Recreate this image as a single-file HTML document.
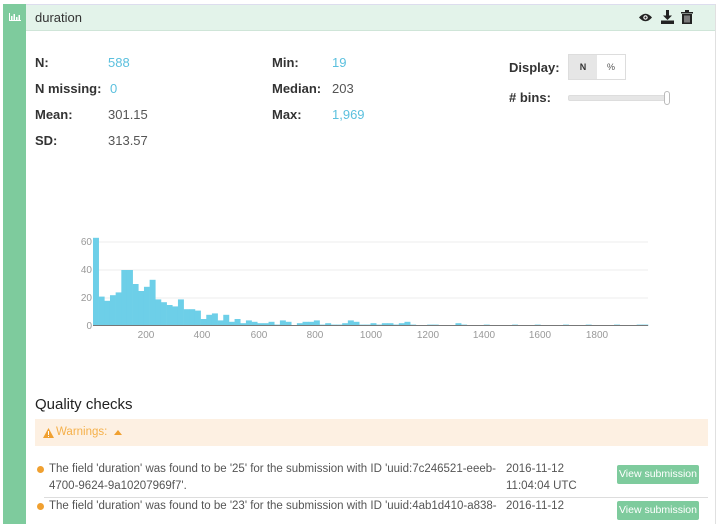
<!DOCTYPE html>
<html><head><meta charset="utf-8"><style>
*{box-sizing:border-box;margin:0;padding:0}
body{width:720px;height:513px;overflow:hidden;background:#fff;font-family:"Liberation Sans",sans-serif;color:#444;position:relative}
.a{position:absolute;white-space:nowrap}
.g{position:absolute;left:3px;top:4px;width:23px;height:520px;background:#7ecb9d}
.hdr{position:absolute;left:26px;top:4px;width:690px;height:27px;background:#e3f3ea;border-bottom:1px solid #cfe5d8;border-top:1px solid #dde}
.rb{position:absolute;left:715px;top:4px;width:1px;height:520px;background:#e0e0e0}
.l{font-weight:bold;font-size:13px;color:#333}
.v{font-size:13px;color:#555}
.b{color:#5bc0de}
.t{font-size:11.5px;color:#555;line-height:17px}
.btn{position:absolute;left:617px;width:82px;height:19px;background:#7ecb9d;color:#fff;font-size:10.5px;text-align:center;line-height:19px;border-radius:2px;white-space:nowrap;overflow:hidden}
</style></head><body>
<div class="g"></div>
<div class="hdr"></div>
<div class="rb"></div>
<svg class="a" style="left:9px;top:12px" width="12" height="10"><g fill="#fff"><rect x="0" y="8" width="12" height="1"/><rect x="0" y="1" width="1" height="8"/><rect x="2" y="4" width="1.5" height="4"/><rect x="4.5" y="2" width="1.5" height="6"/><rect x="7" y="5" width="1.5" height="3"/><rect x="9.5" y="3" width="1.5" height="5"/></g></svg>
<div class="a" style="left:35px;top:10px;font-size:13px;color:#333">duration</div>
<svg class="a" style="left:638px;top:12px" width="15" height="11"><path d="M1 5.5Q7.5 -2 14 5.5Q7.5 13 1 5.5Z" fill="#222"/><circle cx="7.5" cy="5.5" r="2.2" fill="#fff"/><circle cx="7.5" cy="5.5" r="1.1" fill="#222"/></svg>
<svg class="a" style="left:661px;top:10px" width="13" height="14"><path d="M5 0h3v5.5h3l-4.5 4.5L2 5.5h3z M0 10.5h13v3.5H0z" fill="#222"/></svg>
<svg class="a" style="left:681px;top:10px" width="12" height="14"><path d="M0 2h12v1.5H0z M4 0h4v2H4z M1 4h10v10H1z" fill="#222"/><path d="M4 5.5v7M6 5.5v7M8 5.5v7" stroke="#fff" stroke-width="0.8"/></svg>

<div class="a l" style="left:35px;top:55px">N:</div><div class="a v b" style="left:108px;top:55px">588</div>
<div class="a l" style="left:35px;top:81px">N missing:</div><div class="a v b" style="left:110px;top:81px">0</div>
<div class="a l" style="left:35px;top:107px">Mean:</div><div class="a v" style="left:108px;top:107px">301.15</div>
<div class="a l" style="left:35px;top:133px">SD:</div><div class="a v" style="left:108px;top:133px">313.57</div>
<div class="a l" style="left:272px;top:55px">Min:</div><div class="a v b" style="left:332px;top:55px">19</div>
<div class="a l" style="left:272px;top:81px">Median:</div><div class="a v" style="left:332px;top:81px">203</div>
<div class="a l" style="left:272px;top:107px">Max:</div><div class="a v b" style="left:332px;top:107px">1,969</div>
<div class="a l" style="left:509px;top:60px">Display:</div>
<div class="a" style="left:568px;top:54px;width:58px;height:26px;border:1px solid #ddd;display:flex;font-size:9px;font-weight:bold">
<div style="width:28px;background:#e6e6e6;text-align:center;line-height:24px;color:#333">N</div>
<div style="flex:1;text-align:center;line-height:24px;color:#555;font-weight:normal">%</div></div>
<div class="a l" style="left:509px;top:90px">#&nbsp;bins:</div>
<div class="a" style="left:568px;top:95px;width:98px;height:6px;background:#e6e6e6;border:1px solid #ddd;border-radius:2px"></div>
<div class="a" style="left:664px;top:91px;width:6px;height:14px;background:#fff;border:1px solid #bbb;border-radius:3px"></div>

<svg class="a" style="left:60px;top:230px" width="600" height="115" id="ch">
<g stroke="#eee" stroke-width="1"><line x1="33" x2="588" y1="12" y2="12"/><line x1="33" x2="588" y1="40" y2="40"/><line x1="33" x2="588" y1="68" y2="68"/></g>
<g font-family="Liberation Sans,sans-serif" font-size="10" fill="#999" text-anchor="end"><text x="32" y="15">60</text><text x="32" y="43">40</text><text x="32" y="71">20</text><text x="32" y="99">0</text></g>
<g font-family="Liberation Sans,sans-serif" font-size="10" fill="#999" text-anchor="middle"><text x="86" y="108">200</text><text x="142" y="108">400</text><text x="199" y="108">600</text><text x="255" y="108">800</text><text x="311" y="108">1000</text><text x="368" y="108">1200</text><text x="424" y="108">1400</text><text x="480" y="108">1600</text><text x="537" y="108">1800</text></g>
<g id="bars" fill="#6dcfe8"></g>
<line x1="33" x2="588" y1="95.5" y2="95.5" stroke="#777" stroke-width="1"/>
</svg>
<script>
var h=[63,21,18,22,24,40,40,30,25,28,33,19,17,15,14,19,12,12,11,5,8,9,4,8,3,5,2,4,3,2,2,3,1,4,3,0,2,3,3,4,1,2,1,1,2,4,3,1,1,2,1,2,2,1,2,3,1,0,0,1,1,0,0,0,2,1,0,0,0,1,0,0,0,0,1,0,0,0,1,0,0,0,0,1,0,0,0,1,0,0,0,0,1,0,0,0,1,1];
var g=document.getElementById('bars'),s='',w=555/h.length;
for(var i=0;i<h.length;i++){if(h[i]>0){var y=h[i]*1.4;s+='<rect x="'+(33+i*w).toFixed(2)+'" y="'+(96-y).toFixed(2)+'" width="'+(w+0.3).toFixed(2)+'" height="'+y.toFixed(2)+'"/>';}}
g.innerHTML=s;
</script>

<div class="a" style="left:35px;top:396px;font-size:15px;color:#222">Quality checks</div>
<div class="a" style="left:35px;top:419px;width:673px;height:27px;background:#fdf0e2"></div>
<svg class="a" style="left:43px;top:428px" width="11" height="10"><path d="M5.5 0L11 10H0z" fill="#f0a030"/><rect x="5" y="3" width="1" height="4" fill="#fff"/><rect x="5" y="8" width="1" height="1" fill="#fff"/></svg>
<div class="a" style="left:56px;top:426px;font-size:11.5px;color:#f5b04a">Warnings:</div>
<svg class="a" style="left:114px;top:430px" width="8" height="5"><path d="M0 5L4 0L8 5z" fill="#f0a030"/></svg>

<div class="a" style="left:37px;top:466px;width:7px;height:7px;border-radius:50%;background:#f0a030"></div>
<div class="a t" style="left:49px;top:461px">The field 'duration' was found to be '25' for the submission with ID 'uuid:7c246521-eeeb-<br>4700-9624-9a10207969f7'.</div>
<div class="a t" style="left:506px;top:461px">2016-11-12<br>11:04:04 UTC</div>
<div class="btn" style="top:465px">View submission</div>
<div class="a" style="left:44px;top:497px;width:664px;height:1px;background:#ddd"></div>
<div class="a" style="left:37px;top:503px;width:7px;height:7px;border-radius:50%;background:#f0a030"></div>
<div class="a t" style="left:49px;top:498px">The field 'duration' was found to be '23' for the submission with ID 'uuid:4ab1d410-a838-</div>
<div class="a t" style="left:506px;top:498px">2016-11-12</div>
<div class="btn" style="top:501px">View submission</div>
</body></html>
